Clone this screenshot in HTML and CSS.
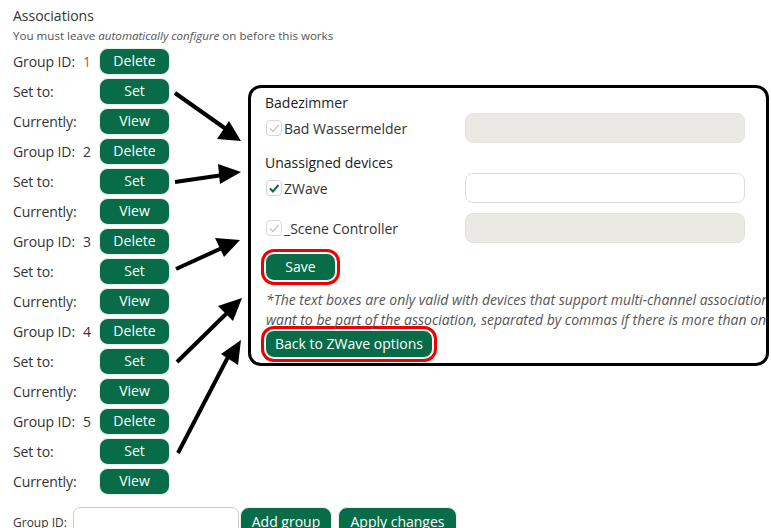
FILE: index.html
```html
<!DOCTYPE html>
<html>
<head>
<meta charset="utf-8">
<link rel="stylesheet" href="styles.css">
</head>
<body>
<div class="page">
  <div class="title">Associations</div>
  <div class="hint">You must leave <em>automatically configure</em> on before this works</div>

  <div class="rows">
    <div class="row"><span class="lbl">Group ID:</span><span class="num first">1</span><button class="btn">Delete</button></div>
    <div class="row"><span class="lbl">Set to:</span><button class="btn">Set</button></div>
    <div class="row"><span class="lbl">Currently:</span><button class="btn">View</button></div>
    <div class="row"><span class="lbl">Group ID:</span><span class="num">2</span><button class="btn">Delete</button></div>
    <div class="row"><span class="lbl">Set to:</span><button class="btn">Set</button></div>
    <div class="row"><span class="lbl">Currently:</span><button class="btn">View</button></div>
    <div class="row"><span class="lbl">Group ID:</span><span class="num">3</span><button class="btn">Delete</button></div>
    <div class="row"><span class="lbl">Set to:</span><button class="btn">Set</button></div>
    <div class="row"><span class="lbl">Currently:</span><button class="btn">View</button></div>
    <div class="row"><span class="lbl">Group ID:</span><span class="num">4</span><button class="btn">Delete</button></div>
    <div class="row"><span class="lbl">Set to:</span><button class="btn">Set</button></div>
    <div class="row"><span class="lbl">Currently:</span><button class="btn">View</button></div>
    <div class="row"><span class="lbl">Group ID:</span><span class="num">5</span><button class="btn">Delete</button></div>
    <div class="row"><span class="lbl">Set to:</span><button class="btn">Set</button></div>
    <div class="row"><span class="lbl">Currently:</span><button class="btn">View</button></div>
  </div>

  <div class="addrow">
    <span class="small-lbl">Group ID:</span>
    <span class="text-input"></span>
    <button class="btn btn-wide add">Add group</button>
    <button class="btn btn-wide apply">Apply changes</button>
  </div>
</div>

<svg class="arrows" width="771" height="528" viewBox="0 0 771 528">
  <g stroke="#000" stroke-width="4" stroke-linecap="butt">
    <line x1="175" y1="93" x2="226" y2="129"/>
    <line x1="175" y1="182" x2="223" y2="175"/>
    <line x1="176" y1="269" x2="222" y2="248"/>
    <line x1="177" y1="362" x2="227" y2="313"/>
    <line x1="178" y1="453" x2="228" y2="357"/>
  </g>
  <g fill="#000">
    <polygon points="241,141 217,139 229,121"/>
    <polygon points="241,172 220,184 218,164"/>
    <polygon points="240,240 224,257 215,238"/>
    <polygon points="242,298 233,321 218,306"/>
    <polygon points="241,340 238,365 221,354"/>
  </g>
</svg>

<div class="panel">
  <div class="room">Badezimmer</div>
  <div class="dev">
    <label class="dev-lbl"><span class="cb disabled"><svg width="14" height="14" viewBox="0 0 14 14"><polyline points="3,7.5 6,10.5 11.5,4" fill="none" stroke="#c8c8c8" stroke-width="1.4"/></svg></span>Bad Wassermelder</label>
    <span class="field disabled"></span>
  </div>
  <div class="room">Unassigned devices</div>
  <div class="dev">
    <label class="dev-lbl"><span class="cb"><svg width="14" height="14" viewBox="0 0 14 14"><polyline points="3,7.5 6,10.5 11.5,4" fill="none" stroke="#0a6e45" stroke-width="2"/></svg></span>ZWave</label>
    <span class="field"></span>
  </div>
  <div class="dev">
    <label class="dev-lbl"><span class="cb disabled"><svg width="14" height="14" viewBox="0 0 14 14"><polyline points="3,7.5 6,10.5 11.5,4" fill="none" stroke="#c8c8c8" stroke-width="1.4"/></svg></span>_Scene Controller</label>
    <span class="field disabled"></span>
  </div>
  <button class="btn hl save">Save</button>
  <p class="note"><span>*The text boxes are only valid with devices that support multi-channel associations. Enter the endpoint numbers you</span><span>want to be part of the association, separated by commas if there is more than one endpoint.</span></p>
  <button class="btn hl back">Back to ZWave options</button>
</div>
</body>
</html>
```

FILE: styles.css
```css
html, body {
  margin: 0;
  padding: 0;
  background: #fff;
}
body {
  width: 771px;
  height: 528px;
  overflow: hidden;
  position: relative;
  font-family: "Open Sans", "DejaVu Sans", sans-serif;
  color: #333;
}
.page {
  padding: 6px 0 0 13px;
}
.title {
  font-size: 14px;
  line-height: 20px;
  color: #333;
}
.hint {
  font-size: 11.6px;
  line-height: 20px;
  color: #555;
}
.hint em {
  font-style: italic;
}
.rows {
  display: flex;
  flex-direction: column;
}
.row {
  display: flex;
  align-items: center;
  height: 30px;
}
.lbl {
  font-size: 14px;
  width: 70px;
  color: #333;
  letter-spacing: -0.1px;
}
.num {
  font-size: 14px;
  width: 16px;
  color: #333;
}
.num.first {
  color: #b0603c;
}
.lbl + .btn {
  margin-left: 16px;
}
.btn {
  box-sizing: border-box;
  font-family: "Open Sans", "DejaVu Sans", sans-serif;
  font-size: 14px;
  color: #fff;
  background: #086c48;
  border: 1px solid #e8f0ec;
  border-radius: 9px;
  width: 71px;
  height: 27px;
  padding: 0;
  line-height: 24px;
  cursor: pointer;
}
.addrow {
  display: flex;
  align-items: flex-start;
  margin-top: 11px;
}
.small-lbl {
  font-size: 12px;
  width: 60px;
  padding-top: 7px;
  color: #333;
}
.text-input {
  box-sizing: border-box;
  width: 166px;
  height: 30px;
  border: 1px solid #ccc;
  border-radius: 7px;
  background: #fff;
}
.btn-wide {
  height: 30px;
  line-height: 26px;
}
.add {
  width: 92px;
  margin-left: 1px;
}
.apply {
  width: 119px;
  margin-left: 6px;
}
.arrows {
  position: absolute;
  left: 0;
  top: 0;
  pointer-events: none;
}
.panel {
  position: absolute;
  left: 248px;
  top: 85px;
  width: 521px;
  height: 281px;
  box-sizing: border-box;
  border: 3px solid #000;
  border-radius: 13px;
  background: #fff;
  padding: 5px 0 0 14px;
  overflow: hidden;
}
.room {
  font-size: 14px;
  line-height: 20px;
  color: #222;
}
.dev {
  display: flex;
  align-items: center;
  height: 30px;
  margin-bottom: 10px;
}
.dev-lbl {
  display: flex;
  align-items: center;
  width: 200px;
  font-size: 14px;
  color: #333;
}
.cb {
  box-sizing: border-box;
  width: 16px;
  height: 16px;
  border: 1px solid #d2d2d2;
  border-radius: 4px;
  margin: 0 2px 0 1px;
  display: flex;
  align-items: center;
  justify-content: center;
  background: #fff;
}
.cb.disabled {
  border-color: #d8d8d8;
}
.field {
  box-sizing: border-box;
  width: 280px;
  height: 30px;
  border: 1px solid #ddd;
  border-radius: 8px;
  background: #fff;
}
.field.disabled {
  background: #eae9e3;
  border-color: #e2e1dc;
}
.hl {
  box-shadow: 0 0 0 1px #fff, 0 0 0 4px #ee0000;
  border-color: #fff;
  height: 28px;
  display: block;
}
.save {
  margin-top: 1px;
  width: 71px;
}
.note {
  margin: 9px 0 0 1px;
  font-size: 14px;
  line-height: 20px;
  font-style: italic;
  color: #555;
  white-space: nowrap;
}
.note span {
  display: block;
}
.back {
  width: 168px;
}
```
